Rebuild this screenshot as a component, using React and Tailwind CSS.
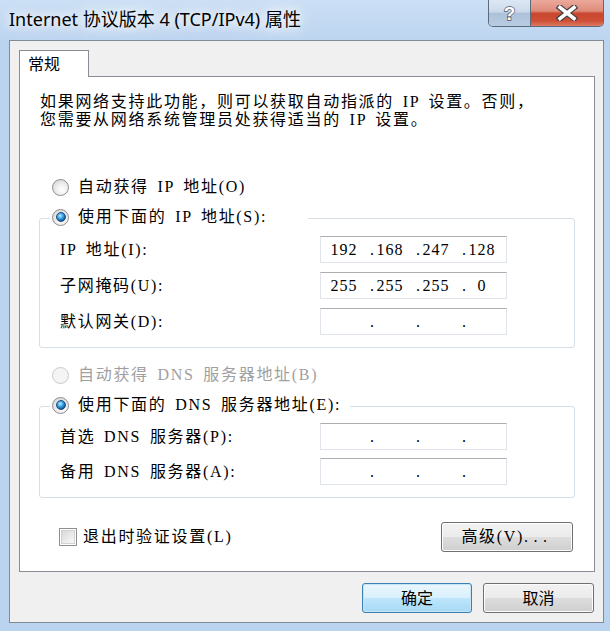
import { Fragment } from 'react';

// 宋体 look: serif latin + CJK
const songti = "font-['Liberation_Serif','Noto_Sans_CJK_SC',serif] text-[16px] tracking-[1.7px] [word-spacing:3px]";
const yahei = "font-['Noto_Sans','Noto_Sans_CJK_SC',sans-serif]";

function Radio({ checked, disabled }) {
  return (
    <span
      className={`flex h-[17px] w-[17px] shrink-0 items-center justify-center rounded-full border ${
        disabled
          ? 'border-[#cacaca] bg-[#f4f4f4]'
          : 'border-[#8c8c8c] bg-[radial-gradient(circle_at_60%_65%,#ffffff_0%,#f2f2f2_35%,#cfcfcf_100%)]'
      }`}
    >
      {checked && (
        <span className="h-[10px] w-[10px] rounded-full border border-[#1b4a78] bg-[radial-gradient(circle_at_40%_35%,#bdeaff_0%,#3aa2e8_40%,#105494_75%,#0b2f57_100%)]" />
      )}
    </span>
  );
}

function RadioRow({ label, checked, disabled, legend }) {
  return (
    <div
      className={`flex h-[20px] items-center gap-[9px] pl-[2px] ${legend} ${
        disabled ? 'text-[#a0a0a0]' : 'text-black'
      }`}
    >
      <Radio checked={checked} disabled={disabled} />
      <span className="whitespace-pre leading-[20px]">{label}</span>
    </div>
  );
}

function IpBox({ parts }) {
  return (
    <div className="flex h-[27px] w-[187px] items-center border border-[#dfe3ea] border-t-[#abadb3] bg-white leading-[20px] tracking-[1px]">
      {parts.map((p, i) => (
        <Fragment key={i}>
          {i > 0 && (
            <span className="w-0 whitespace-nowrap">
              <span className="ml-[3px]">.</span>
            </span>
          )}
          <span className="w-[46px] text-center">{p}</span>
        </Fragment>
      ))}
    </div>
  );
}

function FieldRow({ label, parts }) {
  return (
    <div className="flex items-center">
      <span className="w-[260px] whitespace-pre leading-[20px]">{label}</span>
      <IpBox parts={parts} />
    </div>
  );
}

function Btn({ children, primary, className }) {
  return (
    <div
      className={`flex h-[30px] items-center justify-center rounded-[3px] border ${
        primary
          ? 'border-[#3c7fb1] bg-[linear-gradient(to_bottom,#eaf6fd_0%,#d9f0fc_50%,#bee6fd_51%,#a7d9f5_100%)] shadow-[inset_0_0_0_1px_#c4e5f6]'
          : 'border-[#707070] bg-[linear-gradient(to_bottom,#f2f2f2_0%,#ebebeb_50%,#dddddd_51%,#cfcfcf_100%)] shadow-[inset_0_0_0_1px_#fcfcfc]'
      } ${className}`}
    >
      {children}
    </div>
  );
}

export default function App() {
  const empty = ['', '', '', ''];
  return (
    <div className="flex h-[631px] w-[610px] flex-col bg-[#bad3ee] text-black">
      {/* 标题栏 */}
      <div className="flex h-[40px] shrink-0 items-start justify-between bg-[linear-gradient(to_bottom,#cbdff5,#bdd5f0)]">
        <div
          className={`${yahei} pl-[9px] pt-[6px] text-[18px] leading-[26px] text-black [text-shadow:0_0_8px_#ffffff,0_0_14px_#ffffff,0_0_22px_#eef5fc]`}
        >
          Internet 协议版本 4 (TCP/IPv4) 属性
        </div>
        <div className="mr-[6px] flex h-[27px] overflow-hidden rounded-b-[5px] border border-t-0 border-[#5e6a7c]">
          <div className="flex w-[42px] items-center justify-center border-r border-[#5e6a7c] bg-[linear-gradient(to_bottom,#dce7f3_0%,#cbdaeb_45%,#adc2d9_52%,#b8cce2_100%)]">
            <span className="font-['Liberation_Sans',sans-serif] text-[19px] leading-none font-bold text-white [-webkit-text-stroke:1.4px_#4b5668] [paint-order:stroke_fill]">
              ?
            </span>
          </div>
          <div className="flex w-[72px] items-center justify-center bg-[linear-gradient(to_bottom,#eba99b_0%,#de8c7b_42%,#c8472f_52%,#cf4e36_80%,#dd7a64_100%)]">
            <svg width="22" height="16" viewBox="0 0 22 16">
              <path d="M4 2.5 L18 13.5 M18 2.5 L4 13.5" stroke="#3e3e44" strokeWidth="6" strokeLinecap="square" />
              <path d="M4 2.5 L18 13.5 M18 2.5 L4 13.5" stroke="#ffffff" strokeWidth="3.6" strokeLinecap="square" />
            </svg>
          </div>
        </div>
      </div>

      {/* 客户区 */}
      <div className="ml-[9px] flex h-[583px] w-[595px] flex-col border border-[#828a96] bg-[#f0f0f0] pl-[9px] pr-[8px] pt-[9px]">
        <div
          className={`${yahei} relative z-10 -mb-px flex h-[27px] w-[70px] items-center border border-b-0 border-[#898c95] bg-white pl-[8px] text-[16px] leading-[20px]`}
        >
          常规
        </div>

        <div className={`${songti} flex h-[496px] flex-col border border-[#898c95] bg-white px-[19px]`}>
          <p className="pl-[1px] pt-[16px] leading-[18px]">
            如果网络支持此功能，则可以获取自动指派的 IP 设置。否则，
            <br />
            您需要从网络系统管理员处获得适当的 IP 设置。
          </p>

          <div className="mt-[48px]">
            <RadioRow label="自动获得 IP 地址(O)" legend="ml-[11px]" />
          </div>

          <div className="mt-[10px] flex flex-col">
            <RadioRow label="使用下面的 IP 地址(S):" checked legend="relative z-10 ml-[11px] w-[258px] bg-white" />
            <div className="-mt-[9px] flex flex-col gap-[9px] rounded-[3px] border border-[#d5dfe5] pb-[12px] pl-[20px] pt-[17px]">
              <FieldRow label="IP 地址(I):" parts={['192', '168', '247', '128']} />
              <FieldRow label="子网掩码(U):" parts={['255', '255', '255', '0']} />
              <FieldRow label="默认网关(D):" parts={empty} />
            </div>
          </div>

          <div className="mt-[17px]">
            <RadioRow label="自动获得 DNS 服务器地址(B)" disabled legend="ml-[11px]" />
          </div>

          <div className="mt-[10px] flex flex-col">
            <RadioRow
              label="使用下面的 DNS 服务器地址(E):"
              checked
              legend="relative z-10 ml-[11px] w-[300px] bg-white"
            />
            <div className="-mt-[9px] flex flex-col gap-[8px] rounded-[3px] border border-[#d5dfe5] pb-[12px] pl-[20px] pt-[16px]">
              <FieldRow label="首选 DNS 服务器(P):" parts={empty} />
              <FieldRow label="备用 DNS 服务器(A):" parts={empty} />
            </div>
          </div>

          <div className="mt-[24px] flex items-center justify-between pl-[20px] pr-[2px]">
            <div className="flex items-center gap-[6px]">
              <span className="flex h-[18px] w-[18px] items-center justify-center border border-[#8e8f8f] bg-white">
                <span className="h-[14px] w-[14px] border border-[#d2d2d2] bg-[linear-gradient(135deg,#d8d8d8_0%,#ececec_60%,#f7f7f7_100%)]" />
              </span>
              <span className="leading-[20px]">退出时验证设置(L)</span>
            </div>
            <Btn className="w-[132px] leading-[20px]">
              高级(V)<span className="tracking-[5.5px]">...</span>
            </Btn>
          </div>
        </div>

        <div className={`${yahei} mr-[1px] mt-[11px] flex justify-end gap-[11px] text-[16px] leading-[20px]`}>
          <Btn primary className="w-[110px]">确定</Btn>
          <Btn className="w-[111px]">取消</Btn>
        </div>
      </div>
    </div>
  );
}
